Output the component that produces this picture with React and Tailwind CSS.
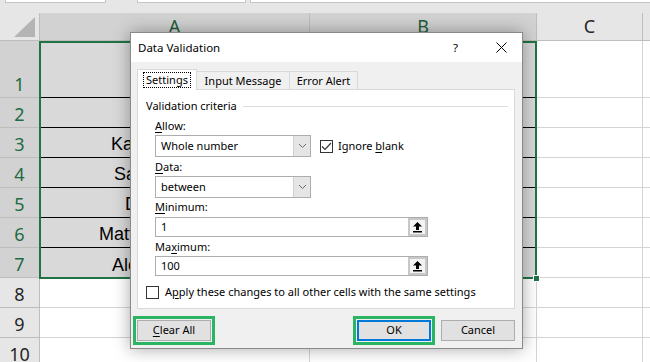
import React from "react";

const uiFont = { fontFamily: '"Noto Sans", "Open Sans", sans-serif' };
const cellFont = { fontFamily: '"Liberation Sans", Arial, sans-serif' };

const rows = [
  { n: 1, h: "h-[57px]", sel: true, text: "", pl: "" },
  { n: 2, h: "h-[30px]", sel: true, text: "", pl: "" },
  { n: 3, h: "h-[30px]", sel: true, text: "Karen Hill", pl: "pl-[71px]" },
  { n: 4, h: "h-[30px]", sel: true, text: "Sam Potter", pl: "pl-[74px]" },
  { n: 5, h: "h-[30px]", sel: true, text: "Dan Cole", pl: "pl-[85px]" },
  { n: 6, h: "h-[30px]", sel: true, text: "Matthew Reed", pl: "pl-[59px]" },
  { n: 7, h: "h-[30px]", sel: true, text: "Alex Grant", pl: "pl-[72px]", last: true },
  { n: 8, h: "h-[30px]" },
  { n: 9, h: "h-[30px]" },
  { n: 10, h: "h-[30px]" },
];

function U({ children }) {
  return <span className="underline decoration-1 underline-offset-[2px]">{children}</span>;
}

function Chevron() {
  return (
    <svg width="9" height="6" viewBox="0 0 9 6">
      <path d="M1 1 L4.5 4.5 L8 1" fill="none" stroke="#6d6d6d" strokeWidth="1" />
    </svg>
  );
}

function RefIcon() {
  return (
    <svg width="11" height="12" viewBox="0 0 11 12">
      <path d="M5.5 1 L10 5.5 L7 5.5 L7 9 L4 9 L4 5.5 L1 5.5 Z" fill="#000" />
      <rect x="1" y="10" width="9" height="1.5" fill="#000" />
    </svg>
  );
}

function Select({ value }) {
  return (
    <div className="flex h-[22px] w-[156px] border border-[#adadad] bg-white">
      <div className="flex flex-1 items-center pl-[5px] text-black">{value}</div>
      <div className="flex w-[17px] items-center justify-center border-l border-[#d0d0d0] bg-[#e5e5e5]">
        <Chevron />
      </div>
    </div>
  );
}

function RefInput({ value }) {
  return (
    <div className="flex h-[20px] w-[273px] border border-[#adadad] bg-white">
      <div className="flex flex-1 items-center pl-[5px] text-black">{value}</div>
      <div className="flex w-[19px] items-center justify-center border-[2px] border-[#c8c8c8] bg-[#f3f3f3]">
        <RefIcon />
      </div>
    </div>
  );
}

function Check({ checked }) {
  return (
    <div className="flex h-[13px] w-[13px] items-center justify-center border border-[#333] bg-white">
      {checked && (
        <svg width="11" height="9" viewBox="0 0 11 9">
          <path d="M1 4.5 L4 7.5 L10 1" fill="none" stroke="#333" strokeWidth="1.2" />
        </svg>
      )}
    </div>
  );
}

function Dialog() {
  return (
    <div
      style={uiFont}
      className="absolute left-[130px] top-[32px] flex h-[317px] w-[393px] flex-col border border-[#8a8a8a] bg-[#f0f0f0] text-[11px] shadow-[0_0_16px_rgba(0,0,0,0.35)]"
    >
      <div className="flex h-[29px] items-center bg-white pl-[7px] text-[11.5px] text-black">
        <span>Data Validation</span>
        <span className="ml-auto mr-[38px]">?</span>
        <svg className="mr-[15px]" width="11" height="11" viewBox="0 0 11 11">
          <path d="M0.5 0.5 L10.5 10.5 M10.5 0.5 L0.5 10.5" stroke="#000" strokeWidth="1" />
        </svg>
      </div>
      <div className="flex flex-1 flex-col px-[6px] pt-[7px]">
        <div className="relative z-10 flex h-[21px] items-end text-black">
          <div className="flex h-[21px] w-[60px] items-center justify-center border border-b-0 border-[#d9d9d9] bg-white">
            <span className="border border-dotted border-black px-[2px] leading-[14px]">Settings</span>
          </div>
          <div className="flex h-[19px] w-[93px] items-center justify-center border border-l-0 border-b-0 border-[#d9d9d9]">
            Input Message
          </div>
          <div className="flex h-[19px] w-[68px] items-center justify-center border border-l-0 border-b-0 border-[#d9d9d9]">
            Error Alert
          </div>
        </div>
        <div className="-mt-px flex h-[220px] w-[378px] flex-col border border-[#d9d9d9] bg-white text-black">
          <div className="mt-[8px] flex items-center pl-[8px] pr-[6px] leading-[16px]">
            <span>Validation criteria</span>
            <div className="ml-[6px] h-px flex-1 bg-[#dcdcdc]" />
          </div>
          <div className="flex flex-col pl-[17px]">
            <div className="mt-[4px] leading-[16px]">
              <U>A</U>llow:
            </div>
            <div className="mt-px flex items-center">
              <Select value="Whole number" />
              <div className="ml-[9px] flex items-center gap-[5px]">
                <Check checked />
                <span>
                  Ignore <U>b</U>lank
                </span>
              </div>
            </div>
            <div className="mt-[2px] leading-[16px]">
              <U>D</U>ata:
            </div>
            <div className="mt-px">
              <Select value="between" />
            </div>
            <div className="mt-px leading-[16px]">
              <U>M</U>inimum:
            </div>
            <div className="mt-[2px]">
              <RefInput value="1" />
            </div>
            <div className="mt-[2px] leading-[16px]">
              Ma<U>x</U>imum:
            </div>
            <div className="mt-px">
              <RefInput value="100" />
            </div>
          </div>
          <div className="mt-[8px] flex items-center gap-[6px] pl-[8px] leading-[16px]">
            <Check />
            <span>
              A<U>p</U>ply these changes to all other cells with the same settings
            </span>
          </div>
        </div>
        <div className="mt-[11px] flex text-black">
          <button className="flex h-[21px] w-[74px] items-center justify-center border border-[#adadad] bg-[#e1e1e1] outline-3 outline-offset-1 outline-[#2bb563]">
            <U>C</U>lear All
          </button>
          <button className="ml-auto flex h-[21px] w-[74px] items-center justify-center border-2 border-[#0078d7] bg-[#e1e1e1] outline-3 outline-offset-1 outline-[#2bb563]">
            OK
          </button>
          <button className="ml-[10px] mr-[1px] flex h-[21px] w-[74px] items-center justify-center border border-[#adadad] bg-[#e1e1e1]">
            Cancel
          </button>
        </div>
      </div>
    </div>
  );
}

export default function App() {
  return (
    <div className="relative h-[362px] w-[650px] overflow-hidden bg-white">
      {/* barra superior */}
      <div className="flex h-[13px] items-start bg-[#e6e6e6]">
        <div className="ml-[5px] h-[3px] w-[101px] border-x border-b border-[#c6c6c6] bg-white" />
        <div className="ml-[31px] h-[3px] w-[109px] border-x border-b border-[#c6c6c6] bg-white" />
        <div className="ml-[4px] h-[3px] flex-1 border-l border-b border-[#c6c6c6] bg-white" />
      </div>

      {/* encabezados de columna */}
      <div className="flex h-[28px] text-[18px]" style={uiFont}>
        <div className="relative w-[40px] border-r border-b border-[#bdbdbd] bg-[#e6e6e6]">
          <svg className="absolute left-[14px] top-[4px]" width="21" height="20" viewBox="0 0 21 20">
            <polygon points="21,0 21,20 0,20" fill="#b4b4b4" />
          </svg>
        </div>
        <div className="flex w-[270px] items-center justify-center border-r border-b border-[#bdbdbd] bg-[#d2d2d2] text-[#1d5d3a]">A</div>
        <div className="flex w-[227px] items-center justify-center border-r border-b border-[#bdbdbd] bg-[#d2d2d2] text-[#1d5d3a]">B</div>
        <div className="flex w-[106px] items-center justify-center border-r border-b border-[#bdbdbd] bg-[#e6e6e6] text-[#262626]">C</div>
        <div className="flex-1 border-b border-[#bdbdbd] bg-[#e6e6e6]" />
      </div>

      {/* filas */}
      {rows.map((r) => (
        <div key={r.n} className={`flex ${r.h}`}>
          <div
            style={uiFont}
            className={`flex w-[40px] items-end justify-center border-r border-b border-[#bdbdbd] pb-[4px] text-[18px] leading-none ${
              r.sel ? "bg-[#d2d2d2] text-[#1d6b40]" : "bg-[#e6e6e6] text-[#262626]"
            }`}
          >
            {r.n}
          </div>
          {r.sel ? (
            <>
              <div
                style={cellFont}
                className={`flex w-[270px] items-end whitespace-nowrap border-r border-black bg-[#d9d9d9] pb-[4px] text-[18px] leading-none text-black ${
                  r.last ? "" : "border-b"
                } ${r.pl}`}
              >
                {r.text}
              </div>
              <div className={`w-[227px] bg-[#d9d9d9] ${r.last ? "" : "border-b border-black"}`} />
            </>
          ) : (
            <>
              <div className="w-[270px] border-r border-b border-[#d4d4d4]" />
              <div className="w-[227px] border-r border-b border-[#d4d4d4]" />
            </>
          )}
          <div className="w-[106px] border-r border-b border-[#d4d4d4]" />
          <div className="flex-1 border-b border-[#d4d4d4]" />
        </div>
      ))}

      {/* seleccion */}
      <div className="absolute left-[39px] top-[41px] h-[238px] w-[498px] border-2 border-[#217346]" />
      <div className="absolute left-[533px] top-[275px] h-[7px] w-[7px] border border-white bg-[#217346]" />

      <Dialog />
    </div>
  );
}
